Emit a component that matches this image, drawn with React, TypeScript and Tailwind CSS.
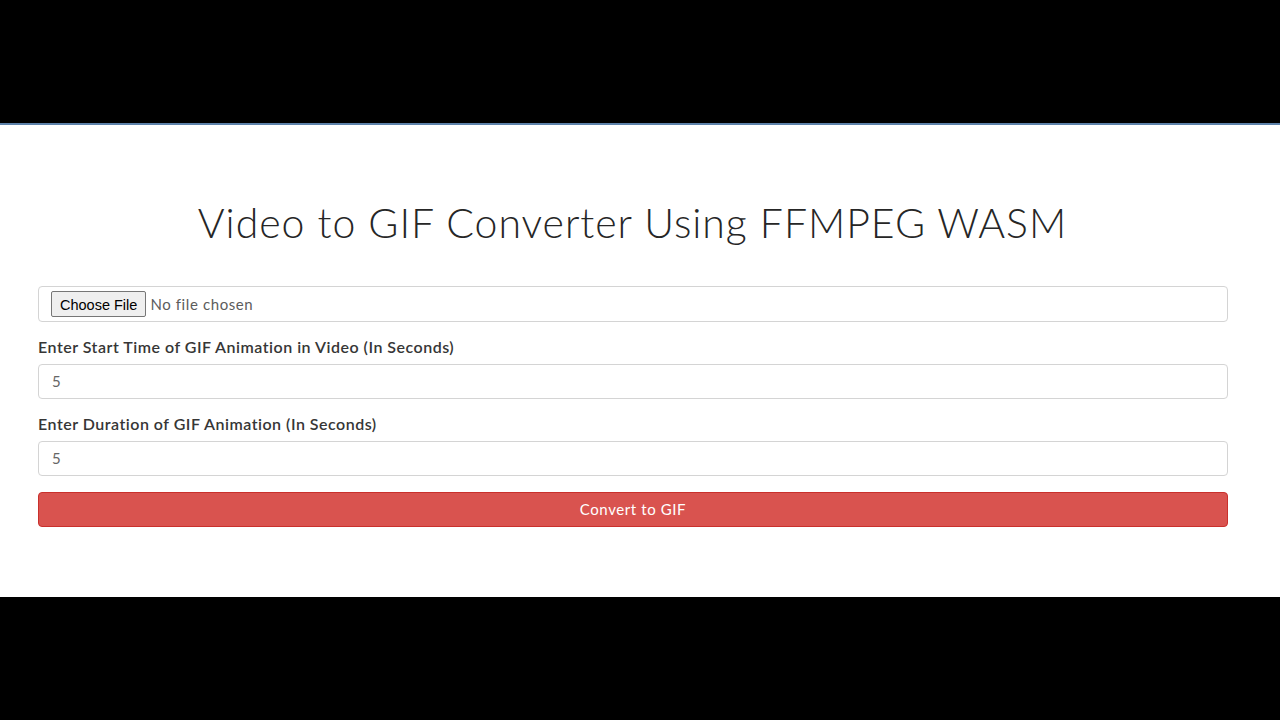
import React from "react";

const font = { fontFamily: "Lato, 'Noto Sans', sans-serif" };

export default function App() {
  return (
    <div className="w-[1280px] h-[720px] bg-black flex flex-col overflow-hidden" style={font}>
      <div className="h-[123px] shrink-0 bg-black" />
      <div className="h-[2px] shrink-0 bg-[#5d82aa]" />
      <main className="h-[472px] shrink-0 bg-white flex flex-col">
        <h1 className="mt-[72px] text-center text-[41px] leading-[52px] font-light text-[#262626] tracking-[0.95px] ml-[-15px]">
          Video to GIF Converter Using FFMPEG WASM
        </h1>
        <form className="ml-[38px] w-[1190px] mt-[37px] flex flex-col">
          <div className="h-[36px] border border-[#d4d4d4] rounded-[4px] flex items-center pl-[12px]">
            <button
              type="button"
              className="h-[26px] px-[8px] pt-[1px] border border-[#767676] rounded-[2px] bg-[#efefef] text-[14.5px] leading-[20px] text-black"
              style={{ fontFamily: "'Liberation Sans', Arial, sans-serif" }}
            >
              Choose File
            </button>
            <span className="ml-[4px] text-[15px] tracking-[0.6px] text-[#5c5c5c]">No file chosen</span>
          </div>
          <label className="mt-[15px] text-[16px] tracking-[0.5px] font-semibold text-[#363636] leading-[20px]">
            Enter Start Time of GIF Animation in Video (In Seconds)
          </label>
          <div className="mt-[7px] h-[35px] border border-[#d4d4d4] rounded-[4px] flex items-center px-[13px] text-[15px] text-[#666]">
            5
          </div>
          <label className="mt-[15px] text-[16px] tracking-[0.5px] font-semibold text-[#363636] leading-[20px]">
            Enter Duration of GIF Animation (In Seconds)
          </label>
          <div className="mt-[7px] h-[35px] border border-[#d4d4d4] rounded-[4px] flex items-center px-[13px] text-[15px] text-[#666]">
            5
          </div>
          <button
            type="button"
            className="mt-[16px] h-[35px] rounded-[4px] bg-[#d9534f] border border-[#c9302c] text-white text-[15px] tracking-[0.6px]"
          >
            Convert to GIF
          </button>
        </form>
      </main>
      <div className="flex-1 bg-black" />
    </div>
  );
}
